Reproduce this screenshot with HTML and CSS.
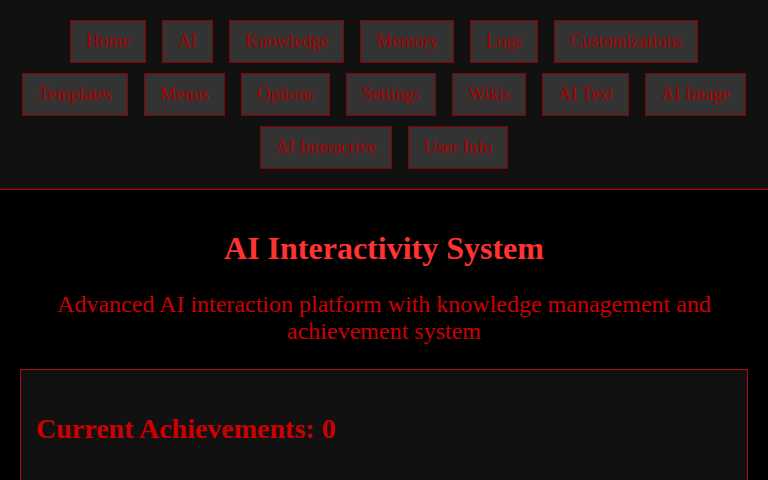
FILE: index.html
```html
<!DOCTYPE html>
<html>
<head>
<meta charset="utf-8">
<link rel="stylesheet" href="styles.css">
</head>
<body>
<nav class="nav">
  <a class="btn">Home</a>
  <a class="btn">AI</a>
  <a class="btn">Knowledge</a>
  <a class="btn">Memory</a>
  <a class="btn">Logs</a>
  <a class="btn">Customizations</a>
  <a class="btn">Templates</a>
  <a class="btn">Menus</a>
  <a class="btn">Options</a>
  <a class="btn">Settings</a>
  <a class="btn">Wikis</a>
  <a class="btn">AI Text</a>
  <a class="btn">AI Image</a>
  <a class="btn">AI Interactive</a>
  <a class="btn">User Info</a>
</nav>
<main class="main">
  <h1 class="title">AI Interactivity System</h1>
  <p class="subtitle">Advanced AI interaction platform with knowledge management and achievement system</p>
  <section class="card">
    <h2 class="card-title">Current Achievements: 0</h2>
  </section>
</main>
</body>
</html>
```
FILE: styles.css
```css
html, body {
  margin: 0;
  padding: 0;
  background: #000;
  font-family: "Liberation Serif", "Times New Roman", serif;
}
.nav {
  background: #111;
  border-bottom: 1px solid #cc0000;
  padding: 20px 20px;
  display: flex;
  flex-wrap: wrap;
  justify-content: center;
  gap: 10px 16px;
}
.btn {
  background: #333;
  border: 1px solid #8b0000;
  color: #a00;
  font-size: 18px;
  line-height: 21px;
  padding: 10px 15px;
  text-decoration: none;
}
.main {
  padding: 20px;
}
.title {
  text-align: center;
  color: #ff3333;
  font-size: 32px;
  margin: 20px 0 0;
}
.subtitle {
  text-align: center;
  color: #cc0000;
  font-size: 24px;
  line-height: 27px;
  margin: 24px 0 0;
}
.card {
  margin-top: 24px;
  background: #111;
  border: 1px solid #b01010;
  padding: 43px 15px 40px;
}
.card-title {
  color: #cc0000;
  font-size: 28px;
  margin: 0;
}
```
